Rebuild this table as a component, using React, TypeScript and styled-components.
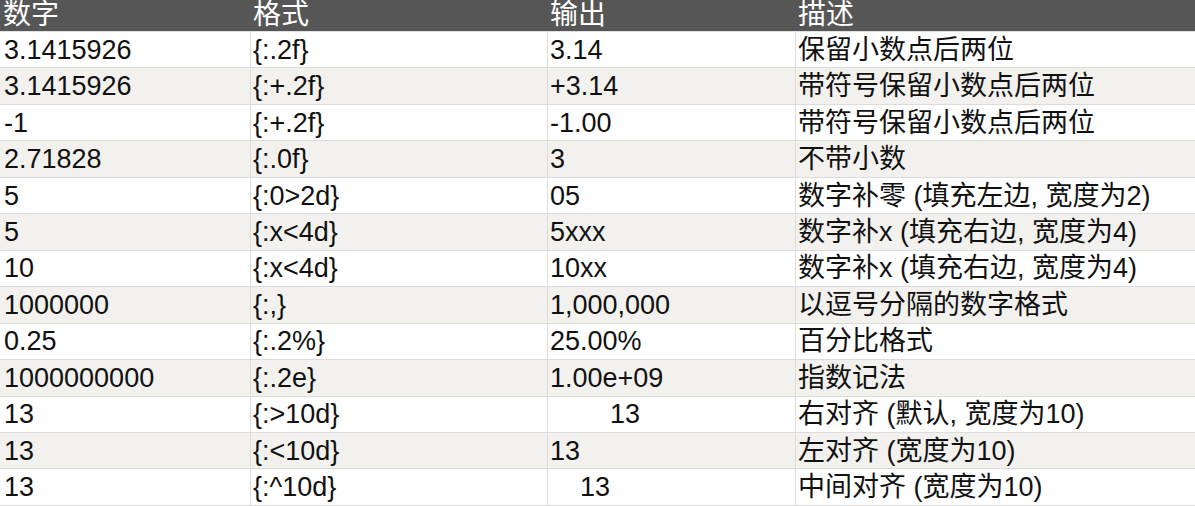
import { FC } from 'react';
import styled, { createGlobalStyle } from 'styled-components';

const GlobalStyle = createGlobalStyle`
  html, body {
    margin: 0;
    padding: 0;
    background: #ffffff;
  }
  body {
    font-family: "Liberation Sans", "Noto Sans CJK SC", sans-serif;
  }
`;

const Table = styled.div`
  display: grid;
  grid-template-columns: 250px 297px 248px 1fr;
  grid-template-rows: 32px repeat(13, 36.46px);
  width: 1195px;
  height: 506px;
  overflow: hidden;
  background: #ffffff;
`;

const HeaderCell = styled.div`
  display: flex;
  align-items: flex-end;
  height: 32px;
  padding-left: 3px;
  box-sizing: border-box;
  overflow: hidden;
  background: #565656;
  border-bottom: 1px solid #e2e2e2;
  color: #ffffff;
  font-size: 28px;
  line-height: 1;
  padding-bottom: 2px;
`;

const Cell = styled.div<{ $alt: boolean; $first: boolean }>`
  display: flex;
  align-items: center;
  box-sizing: border-box;
  padding-left: ${({ $first }) => ($first ? '4px' : '2px')};
  background: ${({ $alt }) => ($alt ? '#f2f1ee' : '#ffffff')};
  border-bottom: 1px solid #dcdcdc;
  border-left: ${({ $first }) => ($first ? 'none' : '1px solid #dcdcdc')};
  color: #111111;
  font-size: 27px;
  line-height: 36px;
  white-space: pre;
  overflow: hidden;
`;

const headers = ['数字', '格式', '输出', '描述'];

const rows: string[][] = [
  ['3.1415926', '{:.2f}', '3.14', '保留小数点后两位'],
  ['3.1415926', '{:+.2f}', '+3.14', '带符号保留小数点后两位'],
  ['-1', '{:+.2f}', '-1.00', '带符号保留小数点后两位'],
  ['2.71828', '{:.0f}', '3', '不带小数'],
  ['5', '{:0>2d}', '05', '数字补零 (填充左边, 宽度为2)'],
  ['5', '{:x<4d}', '5xxx', '数字补x (填充右边, 宽度为4)'],
  ['10', '{:x<4d}', '10xx', '数字补x (填充右边, 宽度为4)'],
  ['1000000', '{:,}', '1,000,000', '以逗号分隔的数字格式'],
  ['0.25', '{:.2%}', '25.00%', '百分比格式'],
  ['1000000000', '{:.2e}', '1.00e+09', '指数记法'],
  ['13', '{:>10d}', '        13', '右对齐 (默认, 宽度为10)'],
  ['13', '{:<10d}', '13', '左对齐 (宽度为10)'],
  ['13', '{:^10d}', '    13', '中间对齐 (宽度为10)'],
];

const App: FC = () => {
  return (
    <>
      <GlobalStyle />
      <Table>
        {headers.map((h) => (
          <HeaderCell key={h}>{h}</HeaderCell>
        ))}
        {rows.map((row, i) =>
          row.map((value, j) => (
            <Cell key={`${i}-${j}`} $alt={i % 2 === 1} $first={j === 0}>
              {value}
            </Cell>
          ))
        )}
      </Table>
    </>
  );
};

export default App;
